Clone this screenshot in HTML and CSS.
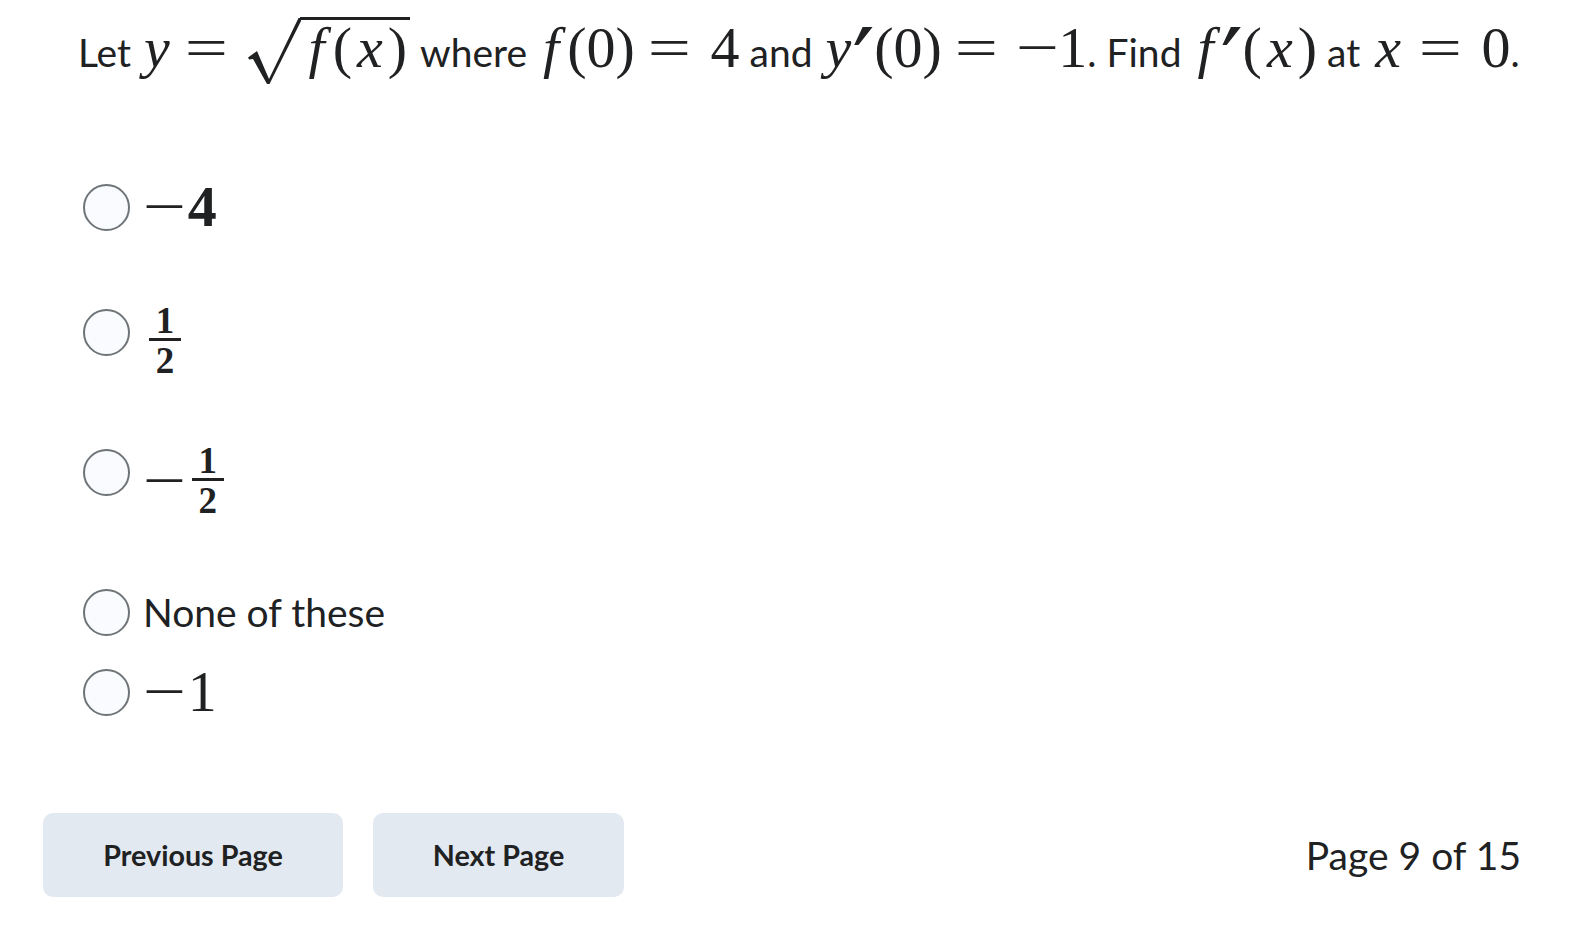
FILE: index.html
```html
<!DOCTYPE html>
<html lang="en">
<head>
<meta charset="utf-8">
<title>Quiz question</title>
<link rel="stylesheet" href="styles.css">
</head>
<body>
<main class="quiz">
  <p class="question">
    <span class="txt">Let</span>
    <span class="math"><i class="y">y</i><span class="rel">=</span><span class="sqrt"><svg class="surd" viewBox="0 0 53 66" aria-hidden="true"><polygon points="0,39.5 9,33 21,61 50.5,0 53,0 53,3 21.5,66 19,66 5,41 1.2,41.5"/></svg><span class="radicand"><i class="f">f</i>(<i class="x">x</i>)</span></span></span>
    <span class="txt">where</span>
    <span class="math"><i class="f">f</i>(0)<span class="rel">=</span>4</span>
    <span class="txt">and</span>
    <span class="math"><i class="y">y</i><span class="prime">′</span>(0)<span class="rel">=</span><span class="bin">−</span>1</span><span class="txt tight">. Find</span>
    <span class="math"><i class="f">f</i><span class="prime">′</span>(<i class="x">x</i>)</span>
    <span class="txt">at</span>
    <span class="math"><i class="x">x</i><span class="rel">=</span>0</span><span class="txt tight">.</span>
  </p>

  <ul class="options">
    <li class="opt opt-first">
      <span class="radio"></span>
      <span class="math opt-math bold"><span class="bin">−</span>4</span>
    </li>
    <li class="opt opt-frac">
      <span class="radio"></span>
      <span class="math opt-math bold frac-math"><span class="frac"><span class="num">1</span><span class="den">2</span></span></span>
    </li>
    <li class="opt opt-frac2">
      <span class="radio"></span>
      <span class="math opt-math bold frac-math"><span class="bin">−</span><span class="frac"><span class="num">1</span><span class="den">2</span></span></span>
    </li>
    <li class="opt opt-after-frac">
      <span class="radio"></span>
      <span class="opt-text">None of these</span>
    </li>
    <li class="opt">
      <span class="radio"></span>
      <span class="math opt-math"><span class="bin">−</span>1</span>
    </li>
  </ul>

  <div class="footer">
    <button class="btn btn-prev" type="button">Previous Page</button>
    <button class="btn btn-next" type="button">Next Page</button>
    <span class="page-count">Page 9 of 15</span>
  </div>
</main>
</body>
</html>
```

FILE: styles.css
```css
* { box-sizing: border-box; }

html, body {
  margin: 0;
  padding: 0;
  background: #ffffff;
}

body {
  width: 1576px;
  height: 940px;
  overflow: hidden;
  font-family: "Lato", "Noto Sans", sans-serif;
  color: #202122;
}

.quiz {
  display: flex;
  flex-direction: column;
}

/* ---------- question ---------- */
.question {
  margin: 0;
  height: 100px;
  padding: 17px 0 0 78px;
  display: flex;
  align-items: baseline;
  white-space: nowrap;
  font-size: 39px;
  line-height: 60px;
}

.txt { margin: 0 10px; }
.txt.tight { margin-left: 0; }
.question .txt:first-child { margin-left: 0; }

.math {
  font-family: "Liberation Serif", "Times New Roman", serif;
  font-size: 58px;
  display: inline-flex;
  align-items: baseline;
}

.math i {
  font-style: italic;
}
.math i.y { padding: 0 2px 0 3px; }
.math i.f { padding: 0 8px 0 6px; }
.math i.x { padding: 0 5px 0 5px; }

.rel,
.bin {
  display: inline-block;
  font-weight: normal;
  transform: scaleX(1.32);
}

.rel { margin: 0 25px 0 18px; }
.bin { margin: 0 5px 0 3px; }

.prime {
  display: inline-block;
  width: 13px;
  font-family: "DejaVu Sans", sans-serif;
  font-size: 100px;
  line-height: 0;
  position: relative;
  top: 33px;
  margin: 0 9px 0 -1px;
}

.sqrt {
  display: inline-block;
  position: relative;
  padding-left: 52px;
  line-height: 56px;
}

.surd {
  position: absolute;
  left: 0;
  top: 0;
  width: 53px;
  height: 68px;
  fill: #202122;
}

.radicand {
  display: inline-block;
  border-top: 3px solid #202122;
  padding: 0 3px;
  line-height: 56px;
}

/* ---------- options ---------- */
.options {
  list-style: none;
  margin: 0;
  padding: 0 0 0 83px;
  display: flex;
  flex-direction: column;
}

.opt {
  height: 80px;
  display: flex;
  align-items: center;
  gap: 13px;
}

.opt-first { margin-top: 67px; }
.opt-frac { margin-top: 45px; }
.opt-frac2 { margin-top: 60px; }
.opt-after-frac { margin-top: 60px; }

.radio {
  flex: none;
  width: 47px;
  height: 47px;
  border-radius: 50%;
  border: 2px solid #6e7477;
  background: #f9fbff;
}

.opt-math {
  font-size: 58px;
  line-height: 58px;
}

.math.bold { font-weight: bold; }
.opt-math .bin { margin: 0 7px 0 5px; }
.frac-math .bin { margin: 0 5px 0 5px; }

.frac-math {
  align-items: center;
  margin-top: 17px;
}

.frac {
  display: inline-flex;
  flex-direction: column;
  align-items: center;
  font-size: 37px;
  line-height: 31px;
  padding: 0 2px;
  margin-left: 4px;
}
.frac .num {
  width: 32px;
  padding-bottom: 2px;
  border-bottom: 3px solid #202122;
  text-align: center;
}
.frac .den {
  padding-top: 4px;
}

.opt-text {
  font-size: 39px;
}

/* ---------- footer ---------- */
.footer {
  margin-top: 81px;
  padding: 0 55px 0 43px;
  display: flex;
  align-items: center;
  gap: 30px;
}

.btn {
  height: 84px;
  border: none;
  border-radius: 10px;
  background: #e3e9f1;
  color: #202122;
  font-family: "Lato", "Noto Sans", sans-serif;
  font-weight: bold;
  font-size: 28.7px;
  cursor: pointer;
}

.btn-prev { width: 300px; }
.btn-next { width: 251px; }

.page-count {
  margin-left: auto;
  font-size: 39px;
}
```
